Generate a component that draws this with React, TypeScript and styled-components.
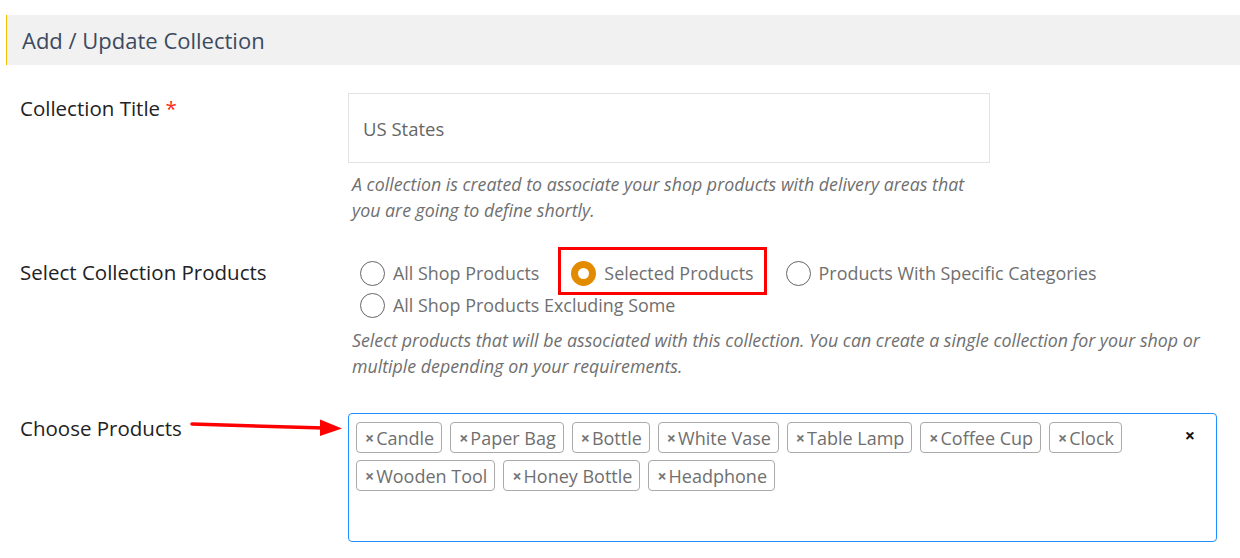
import styled, { createGlobalStyle } from 'styled-components';

const GlobalStyle = createGlobalStyle`
    body {
        margin: 0;
        background: #ffffff;
        font-family: "Open Sans", "Liberation Sans", sans-serif;
    }
`;

const products = [
    'Candle', 'Paper Bag', 'Bottle', 'White Vase', 'Table Lamp', 'Coffee Cup', 'Clock',
    'Wooden Tool', 'Honey Bottle', 'Headphone',
];

const options = [
    { label: 'All Shop Products', checked: false },
    { label: 'Selected Products', checked: true, marked: true },
    { label: 'Products With Specific Categories', checked: false },
    { label: 'All Shop Products Excluding Some', checked: false },
];

const Page = styled.div`
    width: 1240px;
    padding-top: 15px;
`;

const Header = styled.h2`
    margin: 0 0 28px 6px;
    height: 50px;
    display: flex;
    align-items: center;
    padding-left: 15px;
    border-left: 1px solid #f2c200;
    background: #f1f1f1;
    font-size: 22px;
    font-weight: 400;
    color: #3c4a5f;
`;

const Row = styled.div<{ $gap?: number }>`
    display: grid;
    grid-template-columns: 328px 869px;
    padding-left: 20px;
    margin-bottom: ${p => p.$gap ?? 0}px;
`;

const Label = styled.div<{ $top: number }>`
    position: relative;
    padding-top: ${p => p.$top}px;
    font-size: 20.5px;
    line-height: 26px;
    color: #222;
`;

const Star = styled.span`
    color: #ff2a1a;
`;

const Field = styled.div`
    display: flex;
    flex-direction: column;
`;

const TextInput = styled.div`
    box-sizing: border-box;
    width: 642px;
    height: 70px;
    border: 1px solid #e3e3e3;
    display: flex;
    align-items: center;
    padding-left: 14px;
    font-size: 18.5px;
    color: #666;
`;

const Help = styled.p<{ $width: number; $top: number }>`
    margin: ${p => p.$top}px 0 0;
    padding-left: 4px;
    width: ${p => p.$width}px;
    font-size: 17.8px;
    line-height: 26px;
    font-style: italic;
    color: #6f6f6f;
`;

const RadioGroup = styled.div`
    display: flex;
    flex-wrap: wrap;
    padding: 10px 0 0 12px;
`;

const Option = styled.label`
    position: relative;
    display: flex;
    align-items: center;
    height: 32px;
    margin-right: 32px;
    font-size: 17.9px;
    color: #6f6f6f;
`;

const Circle = styled.span<{ $checked: boolean }>`
    box-sizing: border-box;
    width: 25px;
    height: 25px;
    margin-right: 8px;
    border-radius: 50%;
    border: ${p => (p.$checked ? '7px solid #e38b00' : '1px solid #666')};
    background: #fff;
`;

const Marker = styled.span`
    position: absolute;
    left: -13px;
    top: -10px;
    right: -13px;
    bottom: -6px;
    border: 3px solid #f00;
`;

const TagBox = styled.div`
    position: relative;
    box-sizing: border-box;
    width: 869px;
    height: 129px;
    border: 1px solid #1e90ff;
    border-radius: 4px;
    padding: 8px 60px 0 7px;
    display: flex;
    flex-wrap: wrap;
    align-content: flex-start;
    gap: 7px 8px;
`;

const Tag = styled.span`
    box-sizing: border-box;
    height: 31px;
    display: flex;
    align-items: center;
    padding: 0 7px 0 8px;
    border: 1px solid #aaa;
    border-radius: 4px;
    font-size: 18px;
    color: #6f6f6f;
`;

const TagX = styled.span`
    font-size: 16px;
    font-weight: 700;
    margin-right: 2px;
    color: #777;
`;

const Clear = styled.span`
    position: absolute;
    right: 21px;
    top: 9px;
    font-size: 18px;
    font-weight: 700;
    color: #111;
`;

const Arrow = styled.svg`
    position: absolute;
    left: 170px;
    top: 4px;
`;

export default function App() {
    return (
        <Page>
            <GlobalStyle />
            <Header>Add / Update Collection</Header>
            <Row $gap={24}>
                <Label $top={2}>Collection Title <Star>*</Star></Label>
                <Field>
                    <TextInput>US States</TextInput>
                    <Help $width={640} $top={8}>
                        A collection is created to associate your shop products with delivery areas that you are going to define shortly.
                    </Help>
                </Field>
            </Row>
            <Row $gap={34}>
                <Label $top={12}>Select Collection Products</Label>
                <Field>
                    <RadioGroup>
                        {options.map(o => (
                            <Option key={o.label}>
                                <Circle $checked={o.checked} />
                                {o.label}
                                {o.marked && <Marker />}
                            </Option>
                        ))}
                    </RadioGroup>
                    <Help $width={869} $top={6}>
                        Select products that will be associated with this collection. You can create a single collection for your shop or multiple depending on your requirements.
                    </Help>
                </Field>
            </Row>
            <Row>
                <Label $top={2}>
                    Choose Products
                    <Arrow width="160" height="24" viewBox="0 0 160 24">
                        <path d="M2 7 L134 11" stroke="#f00" strokeWidth="3.5" strokeLinecap="round" fill="none" />
                        <path d="M130 2.5 L152 11.5 L130 19 Z" fill="#f00" />
                    </Arrow>
                </Label>
                <TagBox>
                    {products.map(p => (
                        <Tag key={p}><TagX>×</TagX>{p}</Tag>
                    ))}
                    <Clear>×</Clear>
                </TagBox>
            </Row>
        </Page>
    );
}
